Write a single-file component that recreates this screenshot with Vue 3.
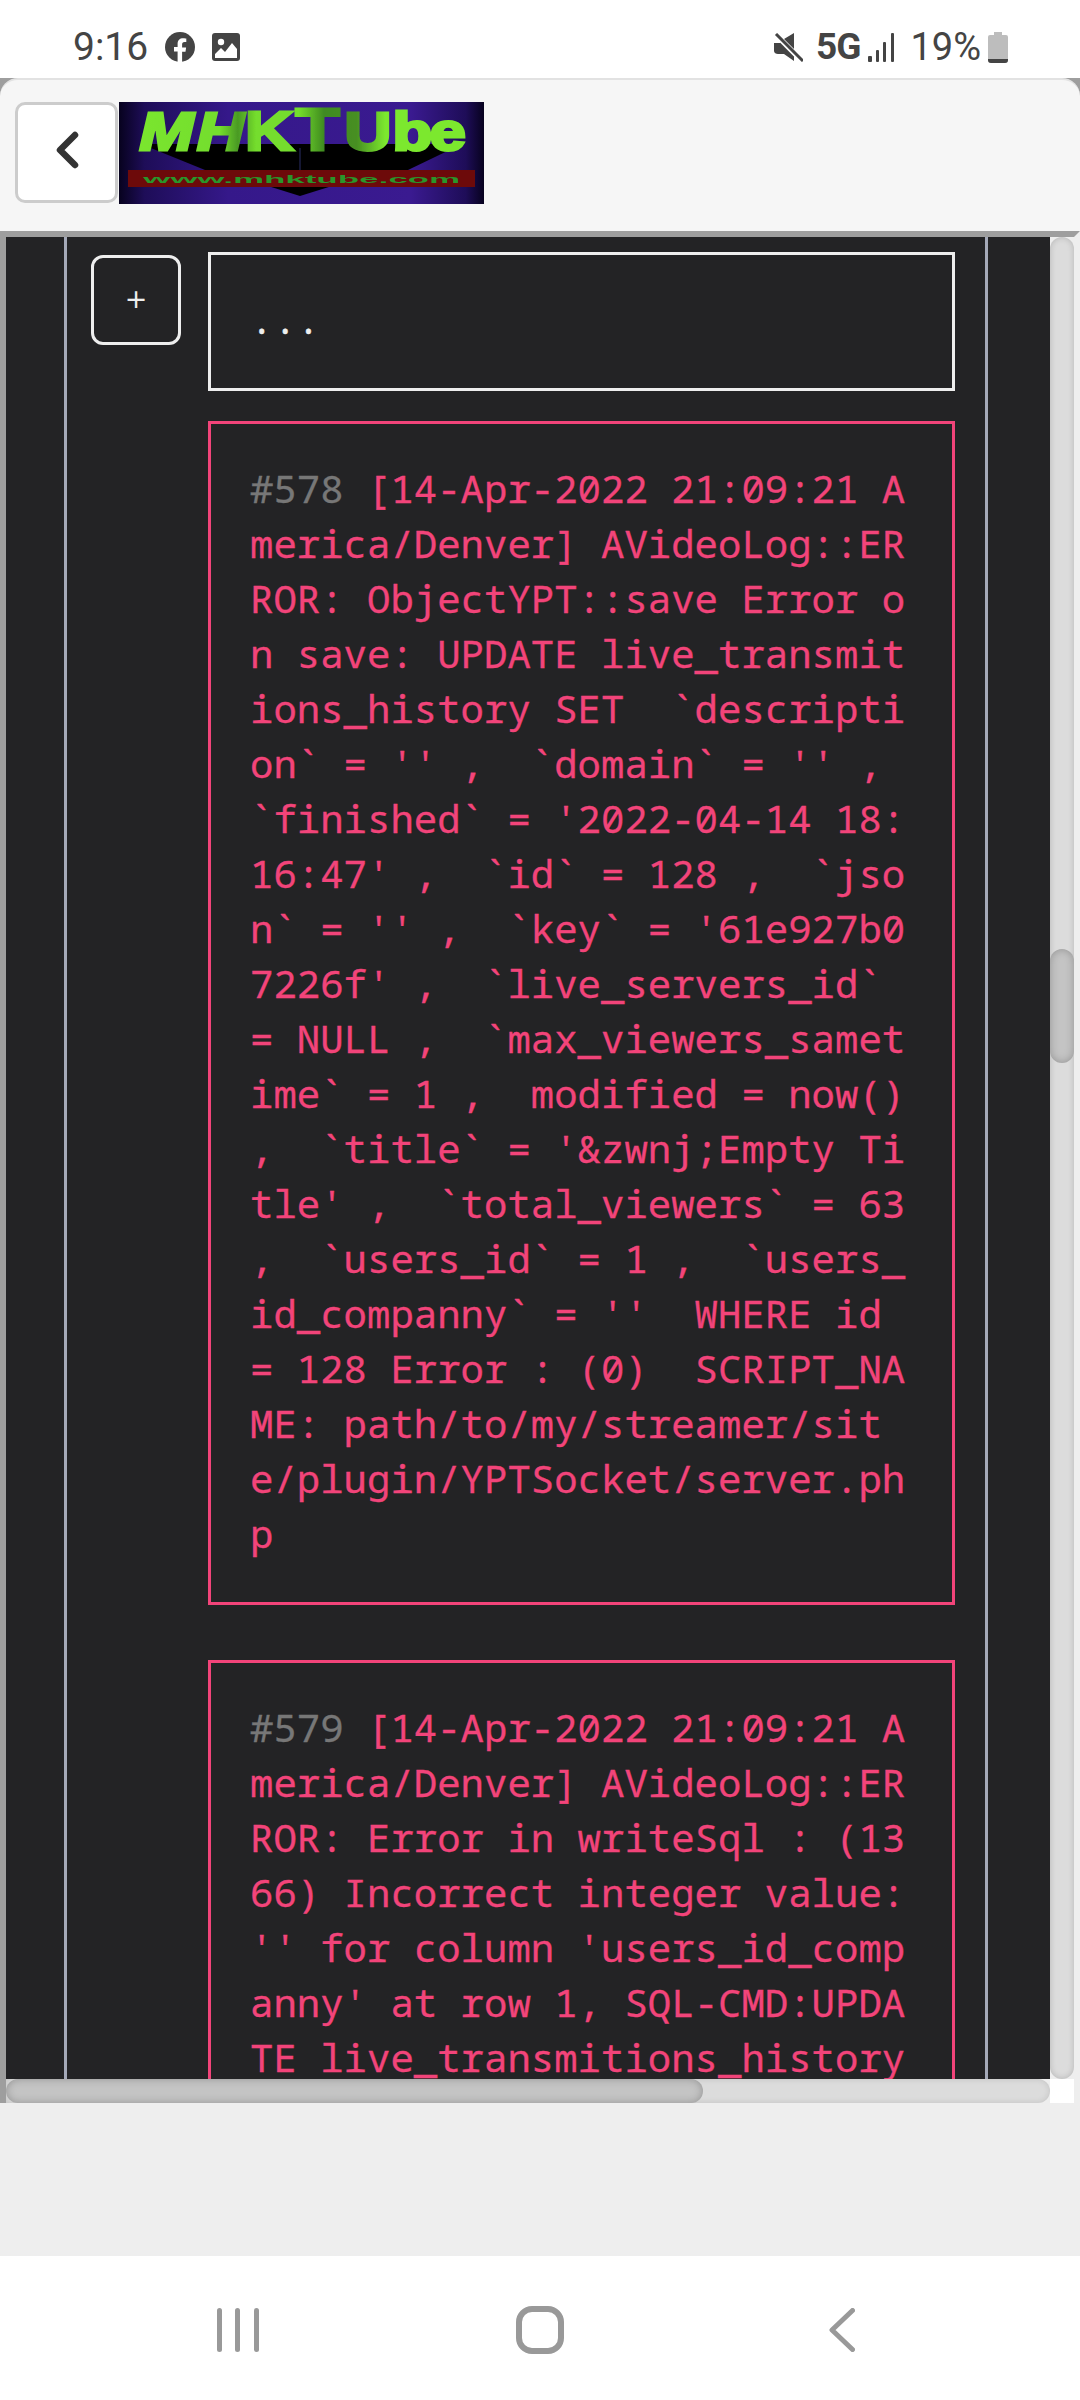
<script setup>
const entries = [
  {
    id: '#578',
    text: "[14-Apr-2022 21:09:21 America/Denver] AVideoLog::ERROR: ObjectYPT::save Error on save: UPDATE live_transmitions_history SET  `description` = '' ,  `domain` = '' ,  `finished` = '2022-04-14 18:16:47' ,  `id` = 128 ,  `json` = '' ,  `key` = '61e927b07226f' ,  `live_servers_id` = NULL ,  `max_viewers_sametime` = 1 ,  modified = now() ,  `title` = '&zwnj;Empty Title' ,  `total_viewers` = 63 ,  `users_id` = 1 ,  `users_id_companny` = ''  WHERE id = 128 Error : (0)  SCRIPT_NAME: path/to/my/streamer/site/plugin/YPTSocket/server.php"
  },
  {
    id: '#579',
    text: "[14-Apr-2022 21:09:21 America/Denver] AVideoLog::ERROR: Error in writeSql : (1366) Incorrect integer value: '' for column 'users_id_companny' at row 1, SQL-CMD:UPDATE live_transmitions_history SET"
  }
]
</script>

<template>
  <div class="screen">
    <div class="status">
      <span class="time">9:16</span>
      <svg class="fb" viewBox="0 0 30 30"><circle cx="15" cy="15" r="15" fill="#444"/><path d="M12.600 30V19.400H9v-4.300h3.600v-3.200c0-3.700 2.200-5.700 5.500-5.700 1.600 0 3.200.3 3.200.3v3.600h-1.800c-1.800 0-2.400 1.100-2.400 2.300v3h4l-.6 4.300h-3.400V30z" fill="#fff"/></svg>
      <svg class="pic" viewBox="0 0 28 28"><rect width="28" height="28" rx="3" fill="#444"/><circle cx="9" cy="9" r="3.200" fill="#fff"/><path d="M3 25v-4l6-6 4 4 7-9 5 6v9z" fill="#fff"/></svg>
      <span class="spacer"></span>
      <svg class="mute" viewBox="0 0 29 29"><path d="M0 10h6l1-1 13 14v5L10 21H4c-2 0-4-1-4-3zM10 6l10-6v16z" fill="#444"/><path d="M2 2l26 26" stroke="#fff" stroke-width="5"/><path d="M2 1l27 27" stroke="#444" stroke-width="3"/></svg>
      <span class="fiveg">5G</span>
      <svg class="signal" viewBox="0 0 27 29"><g fill="#444"><rect x="0" y="23" width="4" height="6" rx="1"/><rect x="8" y="17" width="3" height="12" rx="1"/><rect x="15" y="9" width="3" height="20" rx="1"/><rect x="23" y="0" width="3" height="29" rx="1"/></g></svg>
      <span class="pct">19%</span>
      <svg class="batt" viewBox="0 0 20 31"><path d="M6 0h8v3h4a2 2 0 0 1 2 2v23a3 3 0 0 1-3 3H3a3 3 0 0 1-3-3V5a2 2 0 0 1 2-2h4z" fill="#bdbdbd"/><path d="M0 27h20v1a3 3 0 0 1-3 3H3a3 3 0 0 1-3-3z" fill="#444"/></svg>
    </div>

    <div class="browser">
      <header class="head">
        <button class="back">
          <svg viewBox="0 0 24 38" class="chev"><path d="M20 4L5 19l15 15" fill="none" stroke="#333" stroke-width="6.500" stroke-linecap="round" stroke-linejoin="round"/></svg>
        </button>
        <svg class="logo" viewBox="0 0 365 102" preserveAspectRatio="none">
          <defs>
            <linearGradient id="edge" x1="0" x2="1" y1="0" y2="0">
              <stop offset="0" stop-color="#07021e"/>
              <stop offset=".07" stop-color="#1e0d58"/>
              <stop offset=".3" stop-color="#35188a"/>
              <stop offset=".8" stop-color="#3a1a90"/>
              <stop offset=".95" stop-color="#1e0d58"/>
              <stop offset="1" stop-color="#07021e"/>
            </linearGradient>
            <linearGradient id="mk" gradientUnits="userSpaceOnUse" x1="0" x2="300" y1="0" y2="0">
              <stop offset="0" stop-color="#7ce82f"/>
              <stop offset=".28" stop-color="#74dd2d"/>
              <stop offset=".33" stop-color="#4a9a24"/>
              <stop offset=".38" stop-color="#74dd2d"/>
              <stop offset=".5" stop-color="#74dd2d"/>
              <stop offset=".57" stop-color="#3f8a20"/>
              <stop offset=".66" stop-color="#478f22"/>
              <stop offset=".74" stop-color="#7ce82f"/>
            </linearGradient>
            <filter id="soft"><feGaussianBlur stdDeviation="0.5"/></filter>
          </defs>
          <rect width="365" height="102" fill="url(#edge)"/>
          <path d="M22 42h321l-54 26H86z" fill="#000"/>
          <path d="M149 84l32 10 32-10z" fill="#000"/>
          <path d="M181 46v22" stroke="#2a2f66" stroke-width="1"/>
          <path d="M9 68h347v17H9z" fill="#6d0a0a"/>
          <g filter="url(#soft)">
            <text class="lg-main" transform="scale(1.2 1)" y="48" fill="url(#mk)"><tspan x="17" font-style="italic">M</tspan><tspan x="65" font-style="italic">H</tspan><tspan x="105" font-size="56">K</tspan><tspan x="147" font-size="60">T</tspan><tspan x="188">U</tspan><tspan x="228">b</tspan><tspan x="259">e</tspan></text>
            <text x="24" y="81" class="lg-sub" textLength="317" lengthAdjust="spacingAndGlyphs">www.mhktube.com</text>
          </g>
        </svg>
      </header>

      <div class="panel">
        <div class="viewport">
          <div class="rail">
            <div class="row">
              <button class="plus">+</button>
              <div class="stack">
                <pre class="box plain">...</pre>
                <pre v-for="e in entries" :key="e.id" class="box err"><span class="num">{{ e.id }}</span> {{ e.text }}</pre>
              </div>
            </div>
          </div>
        </div>
        <div class="vbar"><div class="vthumb"></div></div>
      </div>
      <div class="hline">
        <div class="hbar"><div class="hthumb"></div></div>
        <div class="corner"></div>
      </div>
    </div>

    <nav class="nav">
      <svg class="recents" viewBox="0 0 42 44"><g fill="#999"><rect x="0" width="5" height="44" rx="2.500"/><rect x="18" width="5" height="44" rx="2.500"/><rect x="37" width="5" height="44" rx="2.500"/></g></svg>
      <svg class="home" viewBox="0 0 48 48"><rect x="3" y="3" width="42" height="42" rx="13" fill="none" stroke="#999" stroke-width="6"/></svg>
      <svg class="navback" viewBox="0 0 26 44"><path d="M23.500 2.500L3 22l20.500 19.500" fill="none" stroke="#999" stroke-width="5" stroke-linecap="round" stroke-linejoin="round"/></svg>
    </nav>
  </div>
</template>

<style>
html, body { margin: 0; background: #eee; }
</style>

<style scoped>
.screen {
  width: 1080px;
  height: 2400px;
  display: flex;
  flex-direction: column;
  background: #eee;
  overflow: hidden;
  font-family: Roboto, "Liberation Sans", sans-serif;
}
.status {
  height: 78px;
  flex: none;
  background: #fff;
  display: flex;
  align-items: center;
  padding: 16px 72px 0 73px;
  box-sizing: border-box;
  color: #444;
}
.time { font-size: 39px; line-height: 44px; margin-right: 17px; }
.fb { width: 30px; height: 30px; margin-right: 17px; }
.pic { width: 28px; height: 28px; }
.spacer { flex: 1; }
.mute { width: 29px; height: 29px; margin-right: 13px; }
.fiveg { font-size: 37px; font-weight: 700; letter-spacing: -1px; line-height: 44px; margin-right: 8px; }
.signal { width: 27px; height: 29px; margin-right: 15px; }
.pct { font-size: 38px; line-height: 44px; margin-right: 7px; }
.batt { width: 20px; height: 31px; }

.browser {
  flex: 1;
  display: flex;
  flex-direction: column;
  background: #eee;
  min-height: 0;
}
.head {
  height: 159px;
  flex: none;
  box-sizing: border-box;
  background: #9e9e9e;
  display: flex;
  position: relative;
  clip-path: polygon(0 0, 100% 0, 100% 153px, 1074px 159px, 0 159px);
}
.head::before {
  content: "";
  position: absolute;
  inset: 0 0 6px 0;
  background: #f6f6f6;
  border-top: 2px solid #e2e2e2;
  border-radius: 18px 18px 0 0;
  box-sizing: border-box;
}
.back {
  position: relative;
  margin: 24px 0 0 15px;
  width: 103px;
  height: 101px;
  box-sizing: border-box;
  background: #fff;
  border: 3px solid #ccc;
  border-radius: 10px;
  padding: 0 0 5px;
  display: flex;
  align-items: center;
  justify-content: center;
}
.chev { width: 24px; height: 38px; }
.logo {
  position: relative;
  margin: 24px 0 0 1px;
  width: 365px;
  height: 102px;
}
.lg-main {
  font-family: "Liberation Sans", sans-serif;
  font-weight: 700;
  font-size: 54px;
  stroke: url(#mk);
  stroke-width: 3px;
}
.lg-sub {
  font-family: "Liberation Sans", sans-serif;
  font-size: 11px;
  font-weight: 700;
  fill: #2c962a;
}

.panel {
  height: 1842px;
  flex: none;
  display: flex;
}
.viewport {
  width: 1050px;
  flex: none;
  box-sizing: border-box;
  background: #232325;
  border-left: 6px solid #9e9e9e;
  padding-left: 58px;
  overflow: hidden;
}
.rail {
  width: 924px;
  height: 100%;
  box-sizing: border-box;
  border-left: 3px solid #a4a9b8;
  border-right: 3px solid #a4a9b8;
}
.row {
  display: flex;
  align-items: flex-start;
  padding: 15px 0 0 24px;
}
.plus {
  width: 90px;
  height: 90px;
  margin-top: 3px;
  box-sizing: border-box;
  flex: none;
  background: transparent;
  border: 3px solid #eee;
  border-radius: 12px;
  color: #eee;
  font-family: "DejaVu Sans", sans-serif;
  font-size: 27px;
  line-height: 1;
  padding: 0 0 4px;
}
.stack {
  width: 747px;
  margin-left: 27px;
  flex: none;
}
.box {
  margin: 0 0 55px;
  box-sizing: border-box;
  padding: 36px 39px 42px;
  font-family: "Noto Sans Mono", "DejaVu Sans Mono", monospace;
  font-size: 39px;
  line-height: 55px;
  white-space: pre-wrap;
  word-break: break-all;
  border: 3px solid #f2447a;
  color: #f2447a;
  -webkit-text-stroke: 0.3px currentColor;
}
.plain {
  border-color: #eee;
  color: #eee;
  margin-bottom: 30px;
}
.num { color: #777; }

.vbar {
  width: 24px;
  flex: none;
  background: #dcdcdc;
  border-radius: 12px;
  box-shadow: inset 0 0 6px rgba(0,0,0,.18);
  padding-top: 712px;
  box-sizing: border-box;
}
.vthumb {
  height: 114px;
  border-radius: 12px;
  background: #c4c4c4;
  box-shadow: inset 0 0 8px rgba(0,0,0,.25);
}
.hline { display: flex; height: 24px; flex: none; }
.hbar {
  width: 1050px;
  flex: none;
  box-sizing: border-box;
  background: #dcdcdc;
  border-left: 6px solid #9e9e9e;
  border-radius: 0 12px 12px 0;
  box-shadow: inset 0 0 6px rgba(0,0,0,.12);
}
.hthumb {
  width: 697px;
  height: 24px;
  border-radius: 12px;
  background: #c4c4c4;
  box-shadow: inset 0 0 8px rgba(0,0,0,.25);
}
.corner { width: 24px; background: #fff; }

.nav {
  height: 144px;
  flex: none;
  margin-top: auto;
  background: #fff;
  position: relative;
}
.recents { position: absolute; left: 217px; top: 52px; width: 42px; height: 44px; }
.home { position: absolute; left: 516px; top: 50px; width: 48px; height: 48px; }
.navback { position: absolute; left: 829px; top: 52px; width: 26px; height: 44px; }
</style>
